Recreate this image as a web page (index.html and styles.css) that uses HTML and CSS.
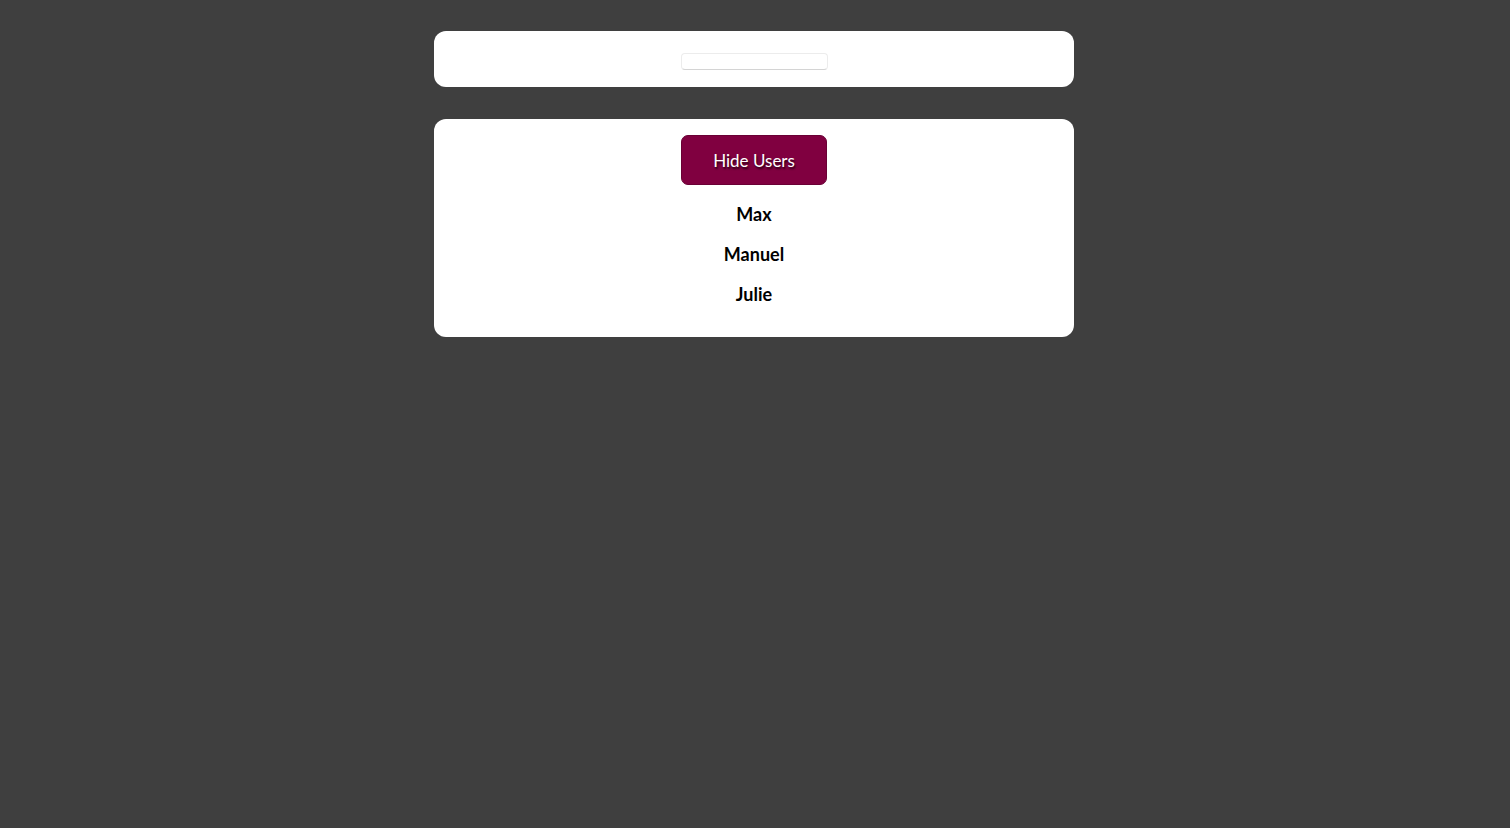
FILE: index.html
```html
<!DOCTYPE html>
<html lang="en">
<head>
<meta charset="utf-8">
<title>Users</title>
<link rel="stylesheet" href="styles.css">
</head>
<body>
<main class="page">
  <section class="card card-search">
    <input class="search" type="search" aria-label="Search">
  </section>
  <section class="card card-users">
    <button class="toggle" type="button">Hide Users</button>
    <ul class="users">
      <li>Max</li>
      <li>Manuel</li>
      <li>Julie</li>
    </ul>
  </section>
</main>
</body>
</html>
```

FILE: styles.css
```css
* { box-sizing: border-box; }

html, body {
  margin: 0;
  padding: 0;
  background: #3f3f3f;
  font-family: "Lato", "Open Sans", sans-serif;
}

.page {
  display: flex;
  flex-direction: column;
  align-items: center;
  gap: 32px;
  padding: 31px 2px 0 0;
}

.card {
  width: 640px;
  background: #ffffff;
  border-radius: 12px;
  display: flex;
  flex-direction: column;
  align-items: center;
}

.card-search {
  height: 56px;
  padding-top: 22px;
}

.search {
  width: 147px;
  height: 17px;
  margin: 0;
  padding: 0 6px;
  border: 1px solid #ececec;
  border-bottom-color: #d4d4d4;
  border-radius: 4px;
  background: #fff;
  outline: none;
  font: inherit;
}

.card-users {
  padding: 16px 0 23px;
}

.toggle {
  width: 146px;
  height: 50px;
  border: 1px solid #6a0035;
  border-radius: 7px;
  background: #800040;
  color: #ffffff;
  font-family: inherit;
  font-size: 17px;
  font-weight: 400;
  text-shadow: 1px 2px 2px rgba(0, 0, 0, 0.7);
  cursor: pointer;
}

.users {
  list-style: none;
  margin: 0;
  padding: 9px 0 0;
  display: flex;
  flex-direction: column;
  align-items: center;
}

.users li {
  height: 40px;
  line-height: 40px;
  font-size: 18px;
  font-weight: 700;
  color: #000;
}
```
